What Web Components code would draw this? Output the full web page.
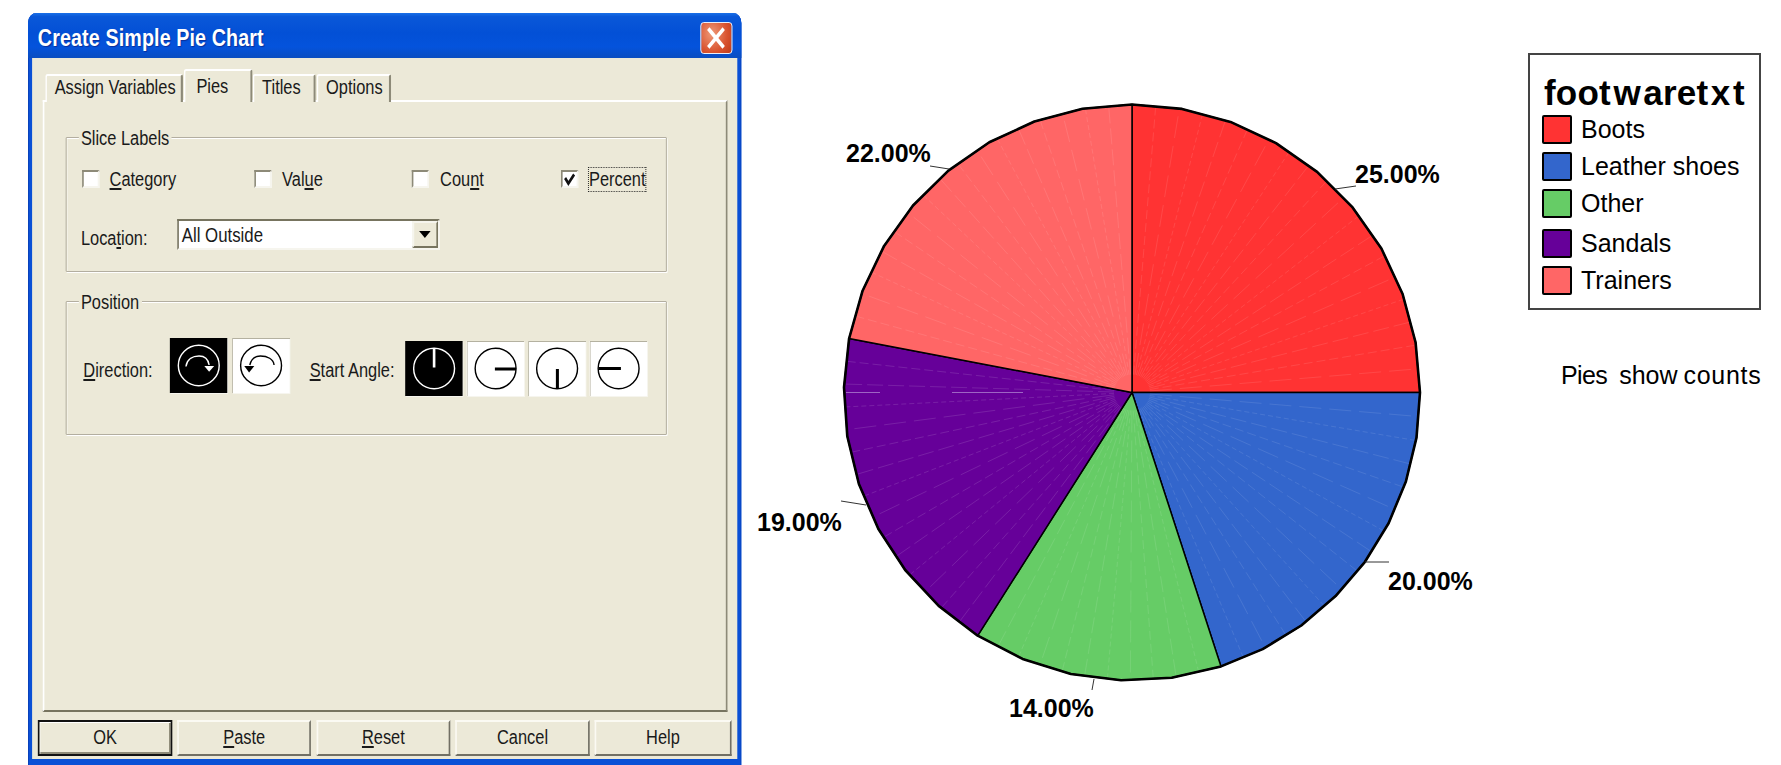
<!DOCTYPE html>
<html><head><meta charset="utf-8"><title>Create Simple Pie Chart</title>
<style>
html,body{margin:0;height:765px;background:#fff;overflow:hidden}
body{display:flex;font-family:"Liberation Sans",Arial,sans-serif;color:#000}
.slice-row{display:grid;grid-template-columns:210.3px 192.7px 181.7px auto;padding:21px 0 0 19px;height:40px;align-items:center}
.loc-row{display:flex;align-items:center;padding:20px 0 0 18px}
.loc-row span{width:117px;padding-top:7px}
.pos-row{display:flex;align-items:flex-start;padding:36px 0 0 21px}
.pos-row .l1{width:105px;padding-top:21px}
.pos-row .l2{padding:21px 0 0 25px;width:116.5px}
.pos-row .gap{width:6px}
.angles{display:flex;gap:5px;margin-top:3px}
u{text-underline-offset:2px}
</style></head><body>
<xp-dialog heading="Create Simple Pie Chart">
  <xp-tab slot="tabs" style="width:168px;margin-left:3px">Assign Variables</xp-tab>
  <xp-tab slot="tabs" active style="width:84px;margin-left:1px">Pies</xp-tab>
  <xp-tab slot="tabs" style="width:77px">Titles</xp-tab>
  <xp-tab slot="tabs" style="width:91px;margin-left:1px">Options</xp-tab>

  <xp-group heading="Slice Labels" style="height:135px">
    <div class="slice-row">
      <xp-check><u>C</u>ategory</xp-check>
      <xp-check>Val<u>u</u>e</xp-check>
      <xp-check>Cou<u>n</u>t</xp-check>
      <xp-check checked focused>Percent</xp-check>
    </div>
    <div class="loc-row"><span>Loca<u>t</u>ion:</span><xp-combo>All Outside</xp-combo></div>
  </xp-group>
  <xp-group heading="Position" style="height:134px;margin-top:29px">
    <div class="pos-row">
      <span class="l1"><u>D</u>irection:</span>
      <xp-dial kind="cw" selected></xp-dial>
      <span class="gap"></span>
      <xp-dial kind="ccw"></xp-dial>
      <span class="l2"><u>S</u>tart Angle:</span>
      <div class="angles">
        <xp-dial kind="top" selected></xp-dial>
        <xp-dial kind="right"></xp-dial>
        <xp-dial kind="bottom"></xp-dial>
        <xp-dial kind="left"></xp-dial>
      </div>
    </div>
  </xp-group>

  <xp-button slot="buttons" default>OK</xp-button>
  <xp-button slot="buttons"><u>P</u>aste</xp-button>
  <xp-button slot="buttons"><u>R</u>eset</xp-button>
  <xp-button slot="buttons">Cancel</xp-button>
  <xp-button slot="buttons" style="width:166.5px">Help</xp-button>
</xp-dialog>

<pie-chart></pie-chart>

<chart-side>
  <chart-legend>
    <legend-item color="#ff3333" style="margin-top:0">Boots</legend-item>
    <legend-item color="#3366cc">Leather shoes</legend-item>
    <legend-item color="#66cc66">Other</legend-item>
    <legend-item color="#660099" style="margin-top:11px">Sandals</legend-item>
    <legend-item color="#ff6666">Trainers</legend-item>
  </chart-legend>
</chart-side>

<script>
function def(name, css, html, extra){
  class E extends HTMLElement{
    constructor(){super();this.attachShadow({mode:'open'}).innerHTML='<style>'+css+'</style>'+html;}
    connectedCallback(){ if(extra) extra.call(this,this.shadowRoot); }
  }
  customElements.define(name,E);
}
const SX=0.82;
def('xp-dialog',`
 :host{display:block;flex:none;width:713px;height:752px;margin:13px 0 0 28px;font:20px "Liberation Sans",Arial,sans-serif;color:#1a1a1a}
 .frame{width:869.5px;height:752px;transform:scaleX(${SX});transform-origin:0 0;box-sizing:border-box;display:flex;flex-direction:column;
   border-radius:10px 10px 0 0;background:#0a50d6;padding:0 5px 6px;box-shadow:inset 1px 0 #0a3fb4,inset -1px 0 #0a3fb4}
 .title{height:45px;flex:none;margin:0 -5px;padding:4px 11px 0 12px;box-sizing:border-box;display:flex;align-items:center;justify-content:space-between;
   border-radius:10px 10px 0 0;background:linear-gradient(#1a70e8 0,#0a58d8 8%,#0350d6 45%,#0453dc 75%,#0a4dc0 100%)}
 .title b{font-size:24px;letter-spacing:.15px;color:#fff;text-shadow:1px 1px 1px #0a2f9a}
 .close{width:39px;height:32px;border:1.5px solid #fff;border-radius:4px;box-sizing:border-box;display:flex;align-items:center;justify-content:center;
   background:radial-gradient(circle at 35% 35%,#ef9a78,#d9532f 60%,#bf3a18)}
 .client{flex:1;background:#ece9d8;display:flex;flex-direction:column;padding:12px 12px 0 13px;min-height:0}
 .tabs{display:flex;align-items:flex-end;height:32px;flex:none;position:relative;z-index:1;margin-bottom:-2px}
 .panel{height:611.5px;flex:none;box-sizing:border-box;border:2px solid;border-color:#fff #8d8a78 #77745f #fff;padding:35px 0 0 25.5px}
 .buttons{display:flex;gap:6.3px;padding:8px 0 0 0;margin-left:-5.7px}
`,`<div class="frame">
  <div class="title"><b id="h"></b><div class="close"><svg width="24" height="22" viewBox="0 0 24 22"><path d="M4 3L20 19M20 3L4 19" stroke="#fff" stroke-width="4" stroke-linecap="square"/></svg></div></div>
  <div class="client">
    <div class="tabs"><slot name="tabs"></slot></div>
    <div class="panel"><slot></slot></div>
    <div class="buttons"><slot name="buttons"></slot></div>
  </div></div>`,function(r){r.getElementById('h').textContent=this.getAttribute('heading');});

def('xp-tab',`
 :host{display:block;box-sizing:border-box;height:28px;padding:0 0 0 9.5px;line-height:23px;background:#ece9d8;
   border:2px solid;border-color:#fff #8d8a78 transparent #fff;border-right-width:3px;border-bottom:0;border-radius:3px 3px 0 0;white-space:nowrap;font-size:20px}
 :host([active]){height:33px;padding-left:13.4px;line-height:30px}
`,`<slot></slot>`);

def('xp-group',`
 :host{display:block;box-sizing:border-box;width:733px;border:1.5px solid #aca899;box-shadow:1px 1px #fff,inset 1px 1px #fff;border-radius:1px}
 .lg{display:block;height:0}
 .lg span{display:inline-block;background:#ece9d8;padding:0 3px;margin-left:15px;line-height:22px;transform:translateY(-11px);font-size:20px}
`,`<div class="lg"><span id="h"></span></div><slot></slot>`,function(r){r.getElementById('h').textContent=this.getAttribute('heading');});

def('xp-check',`
 :host{display:flex;align-items:center;gap:13px;font-size:20px}
 .box{width:21px;height:18px;flex:none;box-sizing:border-box;background:#fff;border:2px solid;border-color:#8d8a78 #f6f5ee #f6f5ee #8d8a78;display:flex;align-items:center;justify-content:center}
 .box svg{display:none}
 :host([checked]) svg{display:block}
 :host([focused]) .t{outline:1.5px dotted #222;outline-offset:0}
`,`<div class="box"><svg width="15" height="13" viewBox="0 0 15 13"><path d="M2 5L6 10.5L13 1.5" fill="none" stroke="#111" stroke-width="3"/></svg></div><span class="t"><slot></slot></span>`);

def('xp-combo',`
 :host{display:flex;width:320px;height:31px;box-sizing:border-box;border:2px solid;border-color:#77745f #f6f5ee #f6f5ee #77745f;background:#fff;align-items:center;padding-left:4px;font-size:20.5px}
 .t{flex:1}
 .btn{width:31px;height:27px;box-sizing:border-box;background:#ece9d8;border:2px solid;border-color:#f6f5ee #77745f #77745f #f6f5ee;display:flex;align-items:center;justify-content:center}
`,`<span class="t"><slot></slot></span><div class="btn"><svg width="16" height="9" viewBox="0 0 16 9"><path d="M1 1H15L8 8Z" fill="#000"/></svg></div>`);

const dials={
 cw:`<path d="M16 28.5C17 21 23 18 29 18C34 18 38 21 39 27" fill="none" stroke="FG" stroke-width="1.4"/><path d="M34.2 28H44L39 33.8Z" fill="FG"/>`,
 ccw:`<path d="M41.6 27C41 21 35 18 28 18C23 18 19 21 17.5 27" fill="none" stroke="FG" stroke-width="1.4"/><path d="M12 28H22L16.8 34.4Z" fill="FG"/>`,
 top:`<path d="M28.7 7.5V26.5" stroke="FG" stroke-width="2.6"/>`,
 right:`<path d="M28 28H49" stroke="FG" stroke-width="3"/>`,
 bottom:`<path d="M29 28V48" stroke="FG" stroke-width="3"/>`,
 left:`<path d="M9 27.5H31" stroke="FG" stroke-width="3"/>`
};
def('xp-dial',`
 :host{display:block;width:70px;height:55px;flex:none;background:#fff;box-shadow:inset 1px 1px #b4b1a0,1px 1px #f6f5ee}
 :host([selected]){background:#000;box-shadow:1px 1px #f6f5ee}
 svg{display:block;width:100%;height:100%}
`,`<svg id="s" viewBox="0 0 57 55" preserveAspectRatio="none"></svg>`,function(r){
  const k=this.getAttribute('kind'),fg=this.hasAttribute('selected')?'#fff':'#000';
  r.getElementById('s').innerHTML=`<circle cx="28.7" cy="27.5" r="20.3" fill="none" stroke="${fg}" stroke-width="1.4"/>`+dials[k].replace(/FG/g,fg);
});

def('xp-button',`
 :host{display:flex;flex:none;align-items:center;justify-content:center;width:163.4px;height:36px;box-sizing:border-box;background:#ece9d8;font-size:20px;
   border:2px solid;border-color:#fbfaf3 #716f64 #716f64 #fbfaf3}
 :host([default]){border-color:#111;box-shadow:inset 1px 1px #fff,inset -2px -2px #8d8a78}
`,`<slot></slot>`);

def('pie-chart',`
 :host{display:block;position:relative;flex:none;width:787px;height:765px}
 svg{display:block}
 .lb{position:absolute;font:bold 25px/30px "Liberation Sans",Arial,sans-serif;color:#000;white-space:nowrap}
`,`<svg id="s" width="787" height="765" viewBox="0 0 787 765"></svg><div id="labels"></div>`,function(r){
  const cx=391,cy=392.5,R=288;
  const P=(a,rr=R)=>{const t=a*Math.PI/180;return [cx+rr*Math.sin(t),cy-rr*Math.cos(t)]};
  const f=p=>p[0].toFixed(1)+' '+p[1].toFixed(1);
  const sl=[[0,90,'#ff3333'],[90,162,'#3366cc'],[162,212.4,'#66cc66'],[212.4,280.8,'#660099'],[280.8,360,'#ff6666']];
  let h='',out=[],lines='';
  sl.forEach(([a,b,c],i)=>{
    const n=Math.max(1,Math.round((b-a)/9.5));const pts=[];
    for(let j=0;j<=n;j++){pts.push(P(a+(b-a)*j/n));}
    out.push(...pts);
    h+=`<path d="M${cx} ${cy}L${pts.map(f).join('L')}Z" fill="${c}" stroke="#000" stroke-width="1.5" stroke-linejoin="round"/>`;
    const m=Math.round((b-a)/4.7);
    for(let j=1;j<m;j++){
      const an=a+(b-a)*j/m,e=P(an,R-2),s=P(an,18),d=['16 5','9 4','22 8','5 3'][(j+i)%4];
      lines+=`<path d="M${f(s)}L${f(e)}" stroke="#fff" stroke-opacity="${c=='#660099'?.12:.1}" stroke-width="1" stroke-dasharray="${d}"/>`;
    }
  });
  lines+=`<path d="M105 392.5H139M211 392.5H282" stroke="#b78ed6" stroke-opacity=".7" stroke-width="1"/>`;
  const lead=[[594,189,615,186],[208,169,189,166],[624,562,648,562],[125,505,100,501],[353,679,351,690]];
  const ld=lead.map(l=>`<path d="M${l[0]} ${l[1]}L${l[2]} ${l[3]}" stroke="#333" stroke-width="1"/>`).join('');
  r.getElementById('s').innerHTML=h+lines+`<path d="M${out.map(f).join('L')}Z" fill="none" stroke="#000" stroke-width="2.6" stroke-linejoin="round"/>`+ld;
  const lab=[['25.00%',614,159],['22.00%',105,138],['20.00%',647,566],['19.00%',16,507],['14.00%',268,693]];
  r.getElementById('labels').innerHTML=lab.map(l=>`<span class="lb" style="left:${l[1]}px;top:${l[2]}px">${l[0]}</span>`).join('');
});

def('chart-side',`
 :host{display:block;flex:none;width:253px;padding-top:53px;font:25px "Liberation Sans",Arial,sans-serif;color:#000}
 .note{margin:48px 0 0 33px;line-height:34px;white-space:nowrap}
 .p{letter-spacing:-.6px}
 .g1{margin-left:5px}
 .c{letter-spacing:.7px;margin-left:-1px}
`,`<slot></slot><div class="note"><span class="p">Pies</span> <span class="g1">show</span> <span class="c">counts</span></div>`);

def('chart-legend',`
 :host{display:block;width:233px;height:257px;box-sizing:border-box;border:2.5px solid #444;padding:15px 0 0 12px}
 .t{font:bold 35px/45px "Liberation Sans",Arial,sans-serif;margin-left:2px;letter-spacing:.2px;white-space:nowrap}
 .t i{font-style:normal;margin-left:2.5px}
 .list{display:block}
`,`<div class="t">foot<i>w</i><i>a</i>ret<i>x</i><i>t</i></div><div class="list"><slot></slot></div>`);

def('legend-item',`
 :host{display:flex;align-items:center;gap:9px;height:29px;margin-top:8px;white-space:nowrap}
 .s{width:30px;height:29px;box-sizing:border-box;border:2.5px solid #000;border-radius:2px;flex:none}
`,`<div class="s" id="s"></div><slot></slot>`,function(r){r.getElementById('s').style.background=this.getAttribute('color');});
</script>
</body></html>
